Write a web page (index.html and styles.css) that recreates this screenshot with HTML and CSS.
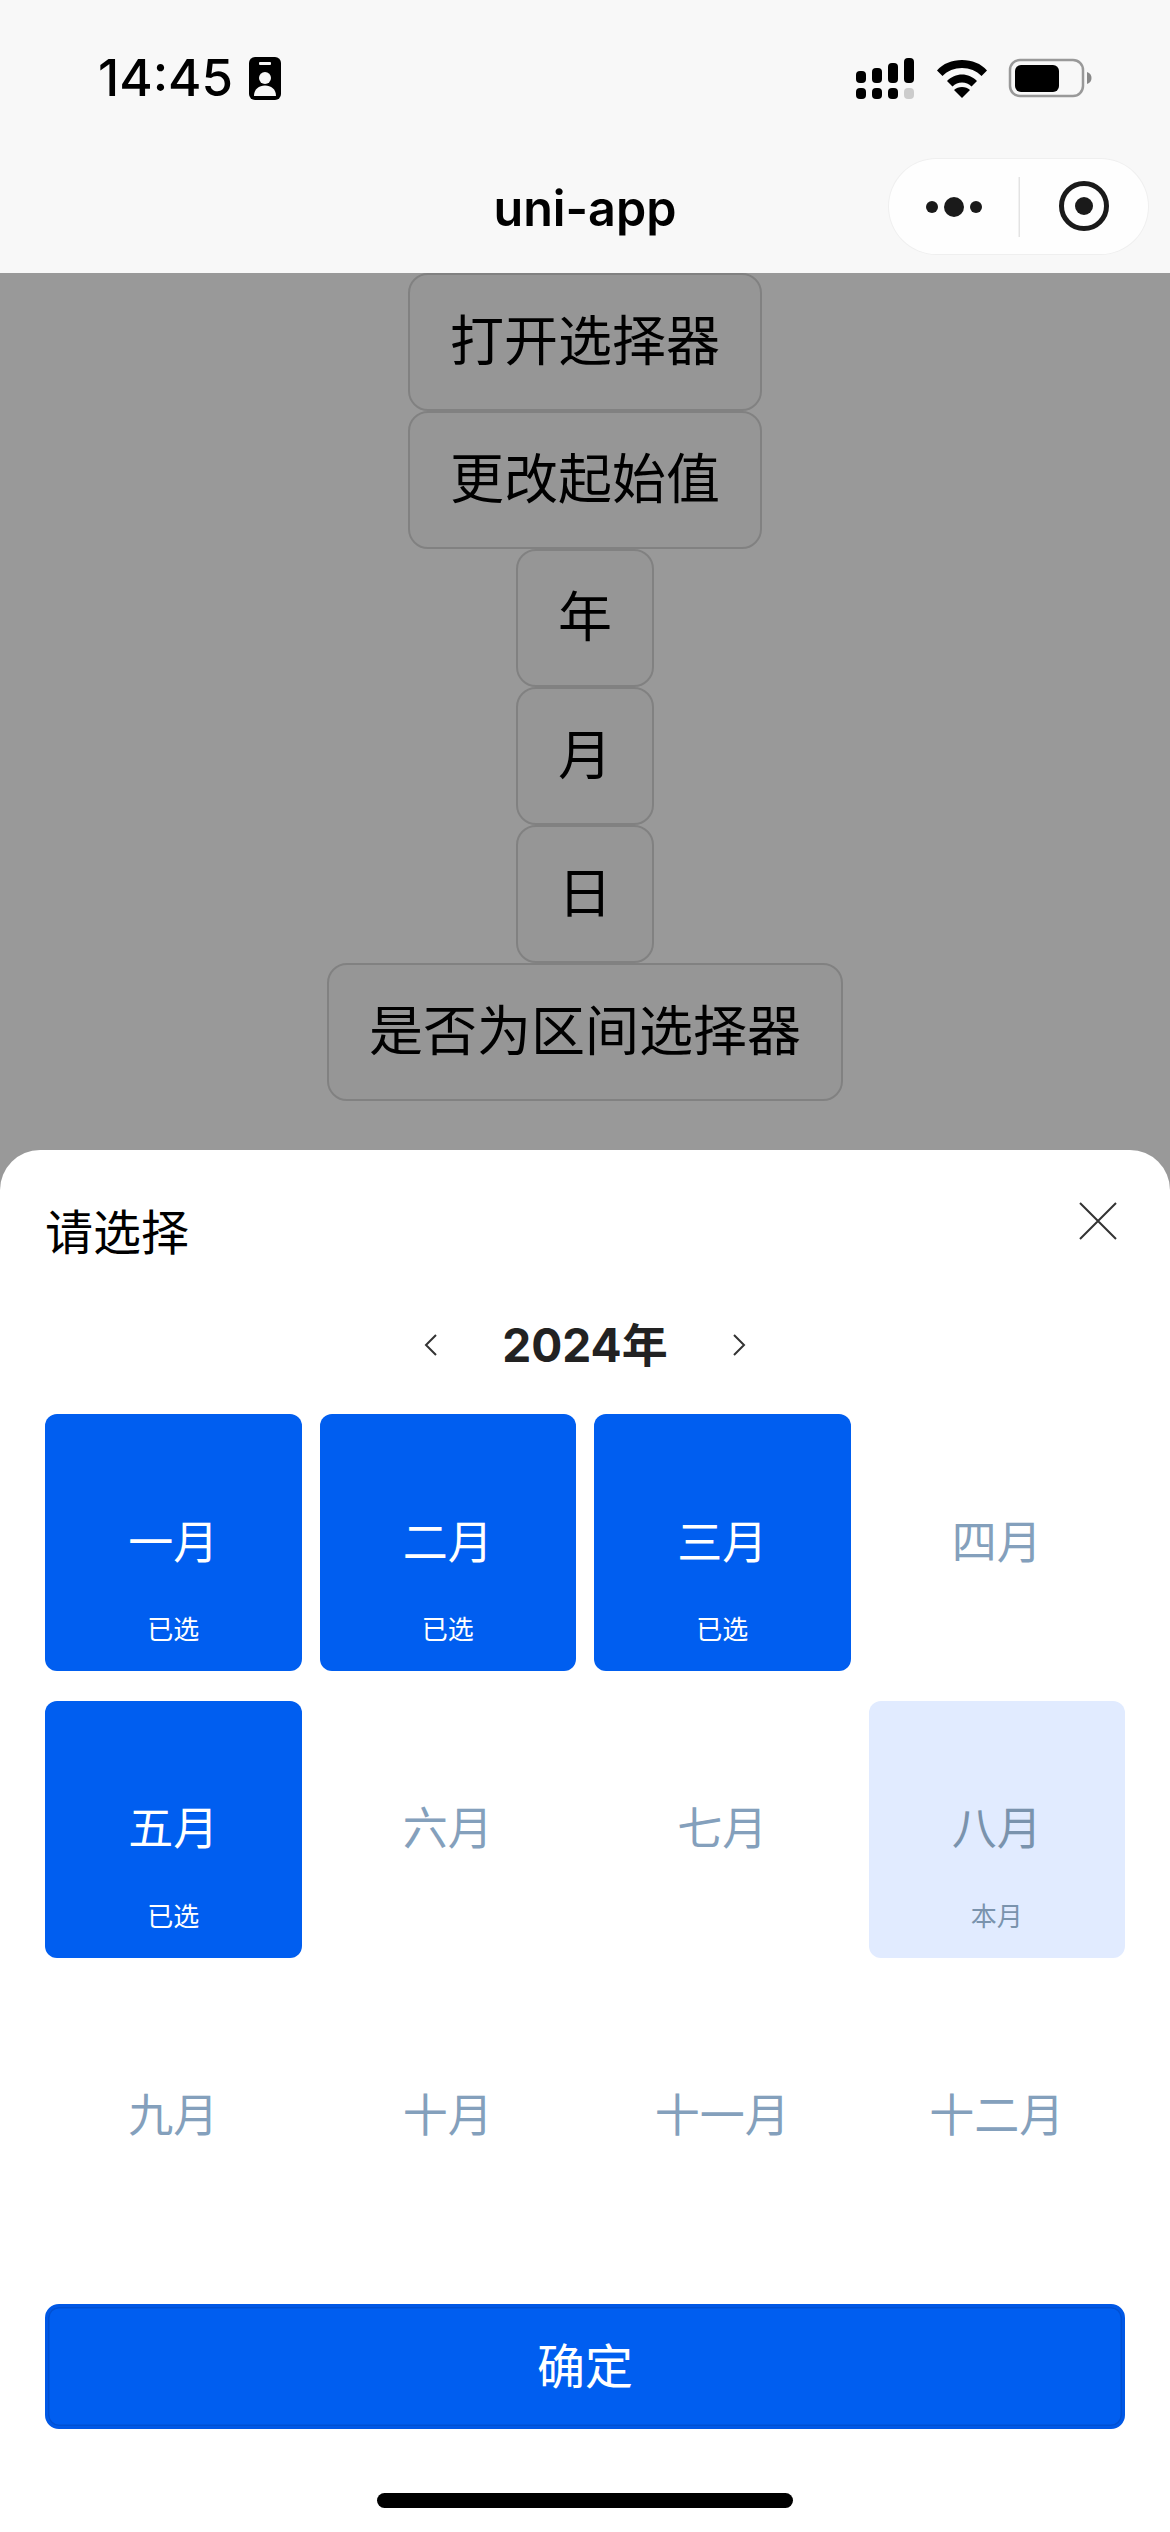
FILE: index.html
```html
<!DOCTYPE html>
<html lang="zh-CN">
<head>
<meta charset="utf-8">
<title>uni-app</title>
<link rel="stylesheet" href="styles.css">
</head>
<body>
<div class="phone">
  <header class="top">
    <div class="status">
      <div class="status-left">
        <span class="time">14:45</span>
        <svg class="badge" width="32" height="43" viewBox="0 0 32 43">
          <rect width="32" height="43" rx="6" fill="#000"/>
          <rect x="10" y="5" width="12" height="3" rx="1" fill="#f8f8f8"/>
          <circle cx="16" cy="21" r="6" fill="#f8f8f8"/>
          <path d="M5 39c0-7 5-10.500 11-10.500S27 32 27 39z" fill="#f8f8f8"/>
        </svg>
      </div>
      <svg class="status-right" width="236" height="42" viewBox="0 0 236 42">
        <g fill="#000">
          <rect x="0" y="13" width="10" height="12" rx="4"/>
          <rect x="16" y="10" width="10" height="15" rx="4"/>
          <rect x="32" y="5" width="10" height="20" rx="4"/>
          <rect x="48" y="0" width="10" height="25" rx="4"/>
          <rect x="0" y="30" width="10" height="11" rx="4"/>
          <rect x="16" y="30" width="10" height="11" rx="4"/>
          <rect x="32" y="30" width="10" height="11" rx="4"/>
        </g>
        <rect x="48" y="30" width="10" height="11" rx="4" fill="#ccc"/>
        <g fill="#000">
          <path d="M81 12.500C87 5.500 96 2 106 2s19 3.500 25 10.500l-5.500 5.500C120.500 12.800 113.500 10 106 10s-14.500 2.800-19.500 8z"/>
          <path d="M91 23c4-4 9.500-6.500 15-6.500S117 19 121 23l-5.500 5.500c-2.500-2.500-6-4-9.500-4s-7 1.500-9.500 4z"/>
          <path d="M106 40l-8-8c2-2 5-3 8-3s6 1 8 3z"/>
        </g>
        <rect x="154" y="2" width="73" height="36" rx="10" fill="none" stroke="#999" stroke-width="2.500"/>
        <rect x="159" y="7" width="44" height="27" rx="6" fill="#000"/>
        <path d="M231 14c3 1 4.500 3 4.500 6s-1.500 5-4.500 6z" fill="#888"/>
      </svg>
    </div>
    <nav class="navbar">
      <span class="nav-side"></span>
      <h1 class="nav-title">uni-app</h1>
      <div class="capsule">
        <svg width="259" height="95" viewBox="0 0 259 95">
          <g fill="#1a1a1a">
            <circle cx="43" cy="48" r="6"/>
            <circle cx="65" cy="48" r="10"/>
            <circle cx="87" cy="48" r="6"/>
          </g>
          <rect x="129.500" y="18" width="1.500" height="60" fill="#e3e3e3"/>
          <circle cx="195" cy="47" r="22.500" fill="none" stroke="#1a1a1a" stroke-width="5"/>
          <circle cx="195" cy="47" r="9" fill="#1a1a1a"/>
        </svg>
      </div>
    </nav>
  </header>

  <main class="content">
    <button class="btn">打开选择器</button>
    <button class="btn">更改起始值</button>
    <button class="btn">年</button>
    <button class="btn">月</button>
    <button class="btn">日</button>
    <button class="btn">是否为区间选择器</button>
  </main>

  <div class="mask"></div>

  <section class="sheet">
    <div class="sheet-head">
      <span class="sheet-title">请选择</span>
      <svg class="close" width="38" height="38" viewBox="0 0 38 38">
        <path d="M1 1l36 36M37 1L1 37" stroke="#333" stroke-width="2" fill="none"/>
      </svg>
    </div>
    <div class="year-bar">
      <svg width="14" height="22" viewBox="0 0 14 22"><path d="M12 1L2 11l10 10" stroke="#333" stroke-width="2" fill="none"/></svg>
      <span class="year">2024年</span>
      <svg width="14" height="22" viewBox="0 0 14 22"><path d="M2 1l10 10L2 21" stroke="#333" stroke-width="2" fill="none"/></svg>
    </div>
    <div class="months">
      <div class="month selected"><span class="month-name">一月</span><span class="month-tag">已选</span></div>
      <div class="month selected"><span class="month-name">二月</span><span class="month-tag">已选</span></div>
      <div class="month selected"><span class="month-name">三月</span><span class="month-tag">已选</span></div>
      <div class="month"><span class="month-name">四月</span></div>
      <div class="month selected"><span class="month-name">五月</span><span class="month-tag">已选</span></div>
      <div class="month"><span class="month-name">六月</span></div>
      <div class="month"><span class="month-name">七月</span></div>
      <div class="month current"><span class="month-name">八月</span><span class="month-tag">本月</span></div>
      <div class="month"><span class="month-name">九月</span></div>
      <div class="month"><span class="month-name">十月</span></div>
      <div class="month"><span class="month-name">十一月</span></div>
      <div class="month"><span class="month-name">十二月</span></div>
    </div>
    <button class="confirm">确定</button>
    <div class="home-bar"></div>
  </section>
</div>
</body>
</html>
```
FILE: styles.css
```css
* { box-sizing: border-box; }
html, body { margin: 0; padding: 0; }
body {
  width: 1170px;
  height: 2532px;
  overflow: hidden;
  background: #fff;
  font-family: "Noto Sans CJK SC", "Noto Sans", sans-serif;
  color: #000;
}
.phone {
  position: relative;
  width: 1170px;
  height: 2532px;
  overflow: hidden;
}
.top { background: #f8f8f8; height: 273px; }
.status {
  height: 135px;
  padding: 56px 78px 0 98px;
  display: flex;
  justify-content: space-between;
  align-items: flex-start;
}
.status-left { display: flex; align-items: center; gap: 16px; height: 44px; }
.time {
  font-family: Inter, "Liberation Sans", sans-serif;
  font-weight: 500;
  font-size: 51px;
  line-height: 44px;
}
.status-right { margin-top: 2px; }
.navbar {
  height: 138px;
  display: grid;
  grid-template-columns: 1fr auto 1fr;
  align-items: center;
  padding: 0 22px 0 0;
}
.nav-title {
  margin: 0;
  font-family: Inter, "Liberation Sans", sans-serif;
  font-weight: 600;
  font-size: 48.500px;
  line-height: 60px;
  padding: 10px 0 0 22px;
}
.capsule {
  justify-self: end;
  width: 259px;
  height: 95px;
  margin-top: 5px;
  border-radius: 48px;
  background: #fefefe;
  box-shadow: 0 0 0 1px #efefef;
  line-height: 0;
}
.content {
  display: flex;
  flex-direction: column;
  align-items: center;
}
.btn {
  appearance: none;
  height: 138px;
  padding: 0 40px 8px;
  background: #fafafa;
  border: 2px solid #d8d8d8;
  border-radius: 20px;
  font-family: "Noto Sans CJK SC", sans-serif;
  font-size: 54px;
  line-height: 1;
  color: #000;
}
.mask {
  position: absolute;
  left: 0;
  right: 0;
  top: 273px;
  bottom: 0;
  background: rgba(0, 0, 0, 0.4);
}
.sheet {
  position: absolute;
  left: 0;
  right: 0;
  top: 1150px;
  bottom: 0;
  background: #fff;
  border-radius: 40px 40px 0 0;
  padding: 0 45px;
}
.sheet-head {
  height: 164px;
  margin-right: 8px;
  display: flex;
  justify-content: space-between;
  align-items: flex-start;
}
.sheet-title {
  margin-top: 47px;
  font-size: 48px;
  line-height: 64px;
  color: #000;
}
.close { margin-top: 52px; }
.year-bar {
  height: 62px;
  display: flex;
  justify-content: center;
  align-items: center;
  gap: 64px;
}
.year {
  font-family: Inter, "Noto Sans CJK SC", sans-serif;
  font-size: 46px;
  font-weight: 700;
  line-height: 62px;
  color: #222;
}
.months {
  margin-top: 38px;
  display: grid;
  grid-template-columns: repeat(4, 1fr);
  grid-auto-rows: 257px;
  column-gap: 18px;
  row-gap: 29.5px;
}
.month {
  position: relative;
  display: flex;
  align-items: center;
  justify-content: center;
  border-radius: 12px;
  color: #84a0bc;
}
.month.selected { background: #005ef0; color: #fff; }
.month.current { background: #e1ebff; color: #7a93ad; }
.month-name { font-size: 45px; font-weight: 400; line-height: 60px; margin-top: -6px; }
.month-tag {
  position: absolute;
  left: 0;
  right: 0;
  bottom: 25px;
  text-align: center;
  font-size: 26px;
  font-weight: 400;
  line-height: 36px;
}
.confirm {
  appearance: none;
  display: block;
  width: 100%;
  height: 125px;
  margin-top: 60px;
  padding: 0 0 8px;
  background: #005ef0;
  border: 3px solid #0058e6;
  box-shadow: inset 0 0 0 1.500px #0050d2;
  border-radius: 14px;
  color: #fff;
  font-family: "Noto Sans CJK SC", sans-serif;
  font-size: 48px;
  line-height: 1;
}
.home-bar {
  width: 416px;
  height: 15px;
  margin: 64px auto 0;
  background: #000;
  border-radius: 8px;
}
```
